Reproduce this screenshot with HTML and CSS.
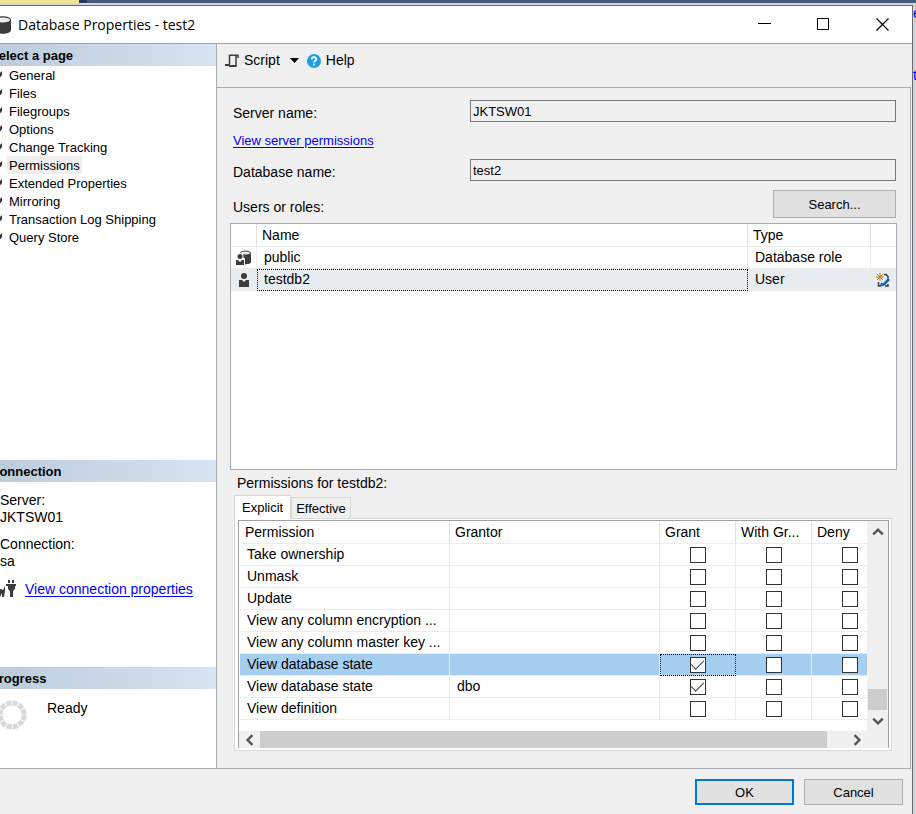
FILE: index.html
```html
<!DOCTYPE html>
<html lang="en">

<head>
    <meta charset="UTF-8">
    <meta name="viewport" content="width=device-width, initial-scale=1.0">
    <title>Database Properties - test2</title>
    <link rel="stylesheet" href="styles.css">
</head>

<body>
    <!-- shared icons -->
    <svg class="sprite" width="0" height="0">
        <symbol id="wrench" viewBox="0 0 14 14">
            <path d="M1 12l6-5c-1-3 1-5 4-5l-1 3 1 1 3-3c1 4-1 7-5 7l-5 4z" fill="#333"/>
        </symbol>
        <symbol id="chevron-up" viewBox="0 0 10 10">
            <path d="M1 7l4-4 4 4" fill="none" stroke="#555" stroke-width="2"/>
        </symbol>
        <symbol id="chevron-down" viewBox="0 0 10 10">
            <path d="M1 3l4 4 4-4" fill="none" stroke="#555" stroke-width="2"/>
        </symbol>
        <symbol id="chevron-left" viewBox="0 0 10 10">
            <path d="M7 1L3 5l4 4" fill="none" stroke="#555" stroke-width="2"/>
        </symbol>
        <symbol id="chevron-right" viewBox="0 0 10 10">
            <path d="M3 1l4 4-4 4" fill="none" stroke="#555" stroke-width="2"/>
        </symbol>
    </svg>

    <div class="desktop">
        <div class="ide-bar"><span class="ide-tab"></span><span class="ide-gap"></span></div>
        <div class="desktop-row">
            <div class="window">
                <header class="titlebar">
                    <svg class="db-icon" width="16" height="18" viewBox="0 0 16 18">
                        <path d="M0 4v10c0 5 16 5 16 0V4c0-5-16-5-16 0z" fill="#3c3c3c"/>
                        <ellipse cx="8" cy="4" rx="7" ry="2.500" fill="#eee"/>
                    </svg>
                    <h1>Database Properties - test2</h1>
                    <button class="win-btn" aria-label="Minimize">
                        <svg width="13" height="13"><path d="M0 5.500h13" stroke="#000"/></svg>
                    </button>
                    <button class="win-btn" aria-label="Maximize">
                        <svg width="13" height="13"><path d="M.5.500h11v11H.5z" fill="none" stroke="#000"/></svg>
                    </button>
                    <button class="win-btn" aria-label="Close">
                        <svg width="13" height="13"><path d="M.5.500l12 12M12.500.5l-12 12" stroke="#000" stroke-width="1.200"/></svg>
                    </button>
                </header>

                <div class="content">
                    <aside class="sidebar">
                        <h2>Select a page</h2>
                        <ul class="pages">
                            <li><svg><use href="#wrench"/></svg><span>General</span></li>
                            <li><svg><use href="#wrench"/></svg><span>Files</span></li>
                            <li><svg><use href="#wrench"/></svg><span>Filegroups</span></li>
                            <li><svg><use href="#wrench"/></svg><span>Options</span></li>
                            <li><svg><use href="#wrench"/></svg><span>Change Tracking</span></li>
                            <li class="active"><svg><use href="#wrench"/></svg><span>Permissions</span></li>
                            <li><svg><use href="#wrench"/></svg><span>Extended Properties</span></li>
                            <li><svg><use href="#wrench"/></svg><span>Mirroring</span></li>
                            <li><svg><use href="#wrench"/></svg><span>Transaction Log Shipping</span></li>
                            <li><svg><use href="#wrench"/></svg><span>Query Store</span></li>
                        </ul>

                        <h2>Connection</h2>
                        <div class="connection">
                            <p>Server:<br>JKTSW01</p>
                            <p>Connection:<br>sa</p>
                            <div class="connection-link">
                                <svg width="22" height="18" viewBox="0 0 22 18" fill="#3c3c3c">
                                    <path d="M2 9h5l2 1 2-4v5l-1 6H8v-4l-2 4H3z"/>
                                    <path d="M14 0h2v3h-2zM18 0h2v3h-2zM12 4h10v2h-1v3l-2 2v6h-3v-6l-2-2V6h-2z"/>
                                </svg>
                                <a href="#">View connection properties</a>
                            </div>
                        </div>

                        <h2>Progress</h2>
                        <div class="progress">
                            <svg width="30" height="30" viewBox="0 0 30 30">
                                <circle cx="15" cy="15" r="12" fill="none" stroke="#d9d9d9" stroke-width="5" stroke-dasharray="5.283 1"/>
                            </svg>
                            <span>Ready</span>
                        </div>
                    </aside>

                    <main class="main">
                        <div class="toolbar">
                            <button class="tool">
                                <svg width="14" height="14" viewBox="0 0 14 14" fill="none" stroke="#3c3c3c" stroke-width="1.500">
                                    <path d="M4.500 10V1.250h8.500V4M11 1.500V12"/>
                                    <path d="M0 11h4l1 1h6.500" stroke-width="2"/>
                                </svg>
                                Script
                                <svg class="caret" width="9" height="5"><path d="M0 0h9L4.500 5z"/></svg>
                            </button>
                            <button class="tool">
                                <svg width="14" height="14" viewBox="0 0 14 14">
                                    <circle cx="7" cy="7" r="7" fill="#1ba1e2"/>
                                    <path d="M4.800 5.500c0-3 4.500-3 4.500-.3C9.300 6.800 7 6.700 7 8.600M7 9.800v1.800" fill="none" stroke="#fff" stroke-width="1.800"/>
                                </svg>
                                Help
                            </button>
                        </div>

                        <div class="panel">
                            <div class="form">
                                <label for="server">Server name:</label>
                                <input id="server" type="text" value="JKTSW01" readonly>
                                <a class="server-link" href="#">View server permissions</a>
                                <label for="database">Database name:</label>
                                <input id="database" type="text" value="test2" readonly>
                            </div>
                            <div class="users-head">
                                <span>Users or roles:</span>
                                <button class="btn btn-search">Search...</button>
                            </div>

                            <div class="users">
                                <table class="grid">
                                    <colgroup><col class="col-icon"><col><col class="col-type"><col class="col-edit"></colgroup>
                                    <thead>
                                        <tr><th></th><th>Name</th><th>Type</th><th></th></tr>
                                    </thead>
                                    <tbody>
                                        <tr>
                                            <td class="icon">
                                                <svg width="16" height="16" viewBox="0 0 16 16">
                                                    <path d="M4 3v9c0 3 11 3 11 0V3z" fill="#3c3c3c"/>
                                                    <ellipse cx="9.500" cy="3" rx="5" ry="2" fill="#eee" stroke="#3c3c3c"/>
                                                    <path d="M0 8h9v8H0z" fill="#fff"/>
                                                    <circle cx="4" cy="6.500" r="3.500" fill="#fff"/>
                                                    <circle cx="4" cy="6.500" r="2.500" fill="#3c3c3c"/>
                                                    <path d="M0 10h2l2 2 2-2h2v5H0z" fill="#3c3c3c"/>
                                                </svg>
                                            </td>
                                            <td>public</td>
                                            <td>Database role</td>
                                            <td></td>
                                        </tr>
                                        <tr class="current">
                                            <td class="icon">
                                                <svg width="16" height="16" viewBox="0 0 16 16" fill="#3c3c3c">
                                                    <circle cx="8" cy="4" r="3"/>
                                                    <path d="M3 8h3l2 2 2-2h3v7H3z"/>
                                                </svg>
                                            </td>
                                            <td class="focus">testdb2</td>
                                            <td>User</td>
                                            <td class="icon">
                                                <svg width="14" height="14" viewBox="0 0 14 14" fill="none">
                                                    <path d="M4 0v8M0 4h8M1 1l6 6M7 1L1 7" stroke="#c27d1a"/>
                                                    <path d="M8 1.500h2l2 2v2M2.500 9v4H5M9 13h3v-2" stroke="#3c3c3c" stroke-width="1.500"/>
                                                    <path d="M4 13.500l1-4 2 1L12 5l2 2-5 5-2 1z" fill="#0d64b0"/>
                                                </svg>
                                            </td>
                                        </tr>
                                    </tbody>
                                </table>
                            </div>

                            <p class="caption">Permissions for testdb2:</p>
                            <div class="tabs" role="tablist">
                                <button class="tab selected" role="tab" aria-selected="true">Explicit</button>
                                <button class="tab" role="tab" aria-selected="false">Effective</button>
                            </div>
                            <div class="tab-page">
                                <div class="permissions">
                                    <div class="view">
                                        <table class="grid">
                                            <colgroup><col class="col-permission"><col><col class="col-check"><col class="col-check"><col class="col-check"></colgroup>
                                            <thead>
                                                <tr><th>Permission</th><th>Grantor</th><th>Grant</th><th>With Gr...</th><th>Deny</th></tr>
                                            </thead>
                                            <tbody>
                                                <tr>
                                                    <td>Take ownership</td><td></td>
                                                    <td class="check"><input type="checkbox" aria-label="Grant"></td>
                                                    <td class="check"><input type="checkbox" aria-label="With Grant"></td>
                                                    <td class="check"><input type="checkbox" aria-label="Deny"></td>
                                                </tr>
                                                <tr>
                                                    <td>Unmask</td><td></td>
                                                    <td class="check"><input type="checkbox" aria-label="Grant"></td>
                                                    <td class="check"><input type="checkbox" aria-label="With Grant"></td>
                                                    <td class="check"><input type="checkbox" aria-label="Deny"></td>
                                                </tr>
                                                <tr>
                                                    <td>Update</td><td></td>
                                                    <td class="check"><input type="checkbox" aria-label="Grant"></td>
                                                    <td class="check"><input type="checkbox" aria-label="With Grant"></td>
                                                    <td class="check"><input type="checkbox" aria-label="Deny"></td>
                                                </tr>
                                                <tr>
                                                    <td>View any column encryption ...</td><td></td>
                                                    <td class="check"><input type="checkbox" aria-label="Grant"></td>
                                                    <td class="check"><input type="checkbox" aria-label="With Grant"></td>
                                                    <td class="check"><input type="checkbox" aria-label="Deny"></td>
                                                </tr>
                                                <tr>
                                                    <td>View any column master key ...</td><td></td>
                                                    <td class="check"><input type="checkbox" aria-label="Grant"></td>
                                                    <td class="check"><input type="checkbox" aria-label="With Grant"></td>
                                                    <td class="check"><input type="checkbox" aria-label="Deny"></td>
                                                </tr>
                                                <tr class="highlight">
                                                    <td>View database state</td><td></td>
                                                    <td class="check focus"><input type="checkbox" aria-label="Grant" checked></td>
                                                    <td class="check"><input type="checkbox" aria-label="With Grant"></td>
                                                    <td class="check"><input type="checkbox" aria-label="Deny"></td>
                                                </tr>
                                                <tr>
                                                    <td>View database state</td><td>dbo</td>
                                                    <td class="check"><input type="checkbox" aria-label="Grant" checked></td>
                                                    <td class="check"><input type="checkbox" aria-label="With Grant"></td>
                                                    <td class="check"><input type="checkbox" aria-label="Deny"></td>
                                                </tr>
                                                <tr>
                                                    <td>View definition</td><td></td>
                                                    <td class="check"><input type="checkbox" aria-label="Grant"></td>
                                                    <td class="check"><input type="checkbox" aria-label="With Grant"></td>
                                                    <td class="check"><input type="checkbox" aria-label="Deny"></td>
                                                </tr>
                                            </tbody>
                                        </table>
                                    </div>
                                    <div class="vscroll">
                                        <button aria-label="Scroll up"><svg width="12" height="12"><use href="#chevron-up"/></svg></button>
                                        <span class="thumb"></span>
                                        <button aria-label="Scroll down"><svg width="12" height="12"><use href="#chevron-down"/></svg></button>
                                    </div>
                                    <div class="hscroll">
                                        <button aria-label="Scroll left"><svg width="12" height="12"><use href="#chevron-left"/></svg></button>
                                        <span class="thumb"></span>
                                        <button aria-label="Scroll right"><svg width="12" height="12"><use href="#chevron-right"/></svg></button>
                                    </div>
                                </div>
                            </div>
                        </div>
                    </main>
                </div>

                <footer class="footer">
                    <button class="btn btn-default">OK</button>
                    <button class="btn">Cancel</button>
                </footer>
            </div>
            <div class="ide-edge"><span>e</span><span>t</span></div>
        </div>
    </div>
</body>

</html>
```
FILE: styles.css
```css
* {
    box-sizing: border-box;
}

body {
    margin: 0;
    font-family: "Liberation Sans", Arial, sans-serif;
    font-size: 14px;
    line-height: 17px;
    color: #000;
}

h1, h2, p, ul {
    margin: 0;
    padding: 0;
    font-weight: normal;
}

button, input {
    font: inherit;
    color: inherit;
}

a {
    color: #0000ff;
    text-decoration: underline;
    text-underline-offset: 2px;
}

svg {
    display: block;
    flex: none;
}

.sprite {
    position: absolute;
}

/* the editor that shows around the dialog */
.desktop {
    display: flex;
    flex-direction: column;
    min-height: 100vh;
    overflow: hidden;
}

.ide-bar {
    display: flex;
    height: 5px;
    background: #455b7c;
    border-bottom: 2px solid #d4d6dc;
}

.ide-tab {
    width: 79px;
    background: #f3e293;
}

.ide-gap {
    width: 8px;
    background: #26355a;
}

.desktop-row {
    flex: 1;
    display: flex;
}

.ide-edge {
    width: 3px;
    overflow: hidden;
    background: #d2d3d8;
    color: #0000ff;
    display: flex;
    flex-direction: column;
    gap: 45px;
}

/* the dialog is dragged a little past the left edge of the screen */
.window {
    flex: 1;
    margin-left: -12px;
    display: flex;
    flex-direction: column;
    background: #f0f0f0;
    border-top: 1px solid #6b6b6b;
    border-right: 1px solid #6b6b6b;
}

.titlebar {
    display: flex;
    align-items: center;
    height: 38px;
    padding-left: 7px;
    background: #fff;
    border-bottom: 1px solid #a0a0a0;
}

.titlebar h1 {
    flex: 1;
    margin-left: 7px;
    font-family: "Open Sans", "Noto Sans", sans-serif;
    font-size: 14px;
    line-height: 20px;
}

.win-btn {
    width: 59px;
    height: 37px;
    padding: 0;
    border: none;
    background: none;
    display: flex;
    align-items: center;
    justify-content: center;
}

.content {
    flex: 1;
    display: flex;
}

/* sidebar */
.sidebar {
    width: 229px;
    display: flex;
    flex-direction: column;
    background: #fff;
    border-right: 1px solid #a9abb2;
    border-bottom: 1px solid #a9abb2;
}

.sidebar h2 {
    height: 22px;
    padding-left: 2px;
    font-size: 13px;
    font-weight: bold;
    line-height: 24px;
    background: linear-gradient(to right, #bccbda, #d7e4f2);
}

.pages {
    flex: 1;
    list-style: none;
    font-size: 13px;
}

.pages li {
    display: flex;
    align-items: center;
    height: 18px;
}

.pages svg {
    width: 14px;
    height: 14px;
    margin-right: 5px;
}

.pages span {
    height: 18px;
    padding: 0 2px;
    line-height: 20px;
}

.pages .active span {
    background: #efefef;
}

.connection {
    height: 185px;
    padding: 10px 12px;
}

.connection p {
    margin-bottom: 10px;
}

.connection-link {
    display: flex;
    align-items: center;
    gap: 9px;
    margin-left: -6px;
}

.progress {
    display: flex;
    align-items: flex-start;
    gap: 20px;
    height: 79px;
    padding: 11px 9px;
}

/* right side */
.main {
    flex: 1;
    display: flex;
    flex-direction: column;
}

.toolbar {
    display: flex;
    align-items: flex-start;
    gap: 8px;
    height: 43px;
    padding: 8px;
}

.tool {
    display: flex;
    align-items: center;
    gap: 5px;
    padding: 0;
    border: none;
    background: none;
}

.caret {
    margin-left: 5px;
}

.panel {
    flex: 1;
    display: flex;
    flex-direction: column;
    margin-right: 1px;
    padding: 12px 13px 17px;
    border: 1px solid #a9abb2;
    border-left: none;
}

.form {
    display: grid;
    grid-template-columns: 237px 1fr;
    row-gap: 10px;
    padding: 0 1px 0 3px;
}

.form label {
    padding-top: 5px;
}

.form input {
    width: 100%;
    height: 22px;
    padding: 0 2px;
    font-size: 13px;
    background: #f0f0f0;
    border: 1px solid #7a7a7a;
    border-radius: 0;
}

.server-link {
    grid-column: 1 / 3;
    justify-self: start;
    font-size: 13px;
    margin-top: 1px;
    line-height: 16px;
}

.users-head {
    display: flex;
    align-items: center;
    justify-content: space-between;
    padding: 9px 1px 5px 3px;
}

.users-head span {
    padding-top: 6px;
}

.btn {
    width: 99px;
    height: 26px;
    padding: 0;
    font-size: 13px;
    background: #e1e1e1;
    border: 1px solid #adadad;
}

.btn-search {
    width: 123px;
    height: 28px;
}

.btn-default {
    border: 2px solid #0078d7;
}

.users {
    flex: 1;
    min-height: 120px;
    background: #fff;
    border: 1px solid #a9abb2;
}

/* data grids */
.grid {
    width: 100%;
    table-layout: fixed;
    border-collapse: separate;
    border-spacing: 0;
}

.grid th,
.grid td {
    height: 22px;
    padding: 0 7px;
    font-weight: normal;
    line-height: 21px;
    text-align: left;
    white-space: nowrap;
    border-right: 1px solid #ececec;
    border-bottom: 1px solid #ececec;
}

.grid th {
    height: 23px;
    padding: 0 5px;
    border-right-color: #e0e0e0;
}

.grid .icon {
    padding: 0 5px;
}

.users .grid th:last-child,
.users .grid td:last-child {
    border-right: none;
}

.col-icon {
    width: 26px;
}

.col-type {
    width: 123px;
}

.col-edit {
    width: 25px;
}

.col-permission {
    width: 210px;
}

.col-check {
    width: 76px;
}

.grid .current td {
    background: #e8edf2;
}

.grid .highlight td {
    background: #a5cef0;
    border-color: #e4eef7;
}

.grid .focus {
    outline: 1px dotted #000;
    outline-offset: -1px;
}

.grid .check {
    padding: 0;
}

.check input {
    appearance: none;
    display: flex;
    align-items: center;
    justify-content: center;
    width: 16px;
    height: 16px;
    margin: 3px auto 2px;
    background: #fff;
    border: 1px solid #333;
}

.check input:checked::before {
    content: "";
    width: 6px;
    height: 11px;
    margin-bottom: 4px;
    border: solid #444;
    border-width: 0 1px 1px 0;
    transform: rotate(45deg);
}

/* tabs */
.caption {
    padding: 5px 7px 3px;
}

.tabs {
    display: flex;
    align-items: flex-end;
    padding-left: 4px;
}

.tab {
    height: 21px;
    padding: 0 4px;
    font-size: 13px;
    background: #f0f0f0;
    border: 1px solid #d9d9d9;
    border-bottom: none;
}

.tab.selected {
    height: 24px;
    padding: 0 7px;
    margin-bottom: -1px;
    position: relative;
    background: #fff;
}

.tab-page {
    margin: 0 5px 0 4px;
    padding: 1px 2px 2px 3px;
    background: #fff;
    border: 1px solid #d9d9d9;
}

.permissions {
    display: grid;
    grid-template-columns: 1fr 21px;
    border: 1px solid #a0a0a0;
    border-bottom: none;
}

.view {
    height: 210px;
    min-width: 0;
    padding-left: 1px;
    overflow: hidden;
}

.view .grid {
    width: calc(100% + 21px);
}

.vscroll,
.hscroll {
    display: flex;
    background: #f0f0f0;
}

.vscroll {
    flex-direction: column;
}

.vscroll .thumb {
    height: 21px;
    margin: auto 1px 0;
    background: #cdcdcd;
}

.hscroll {
    grid-column: 1 / 3;
    height: 17px;
    padding-right: 21px;
}

.hscroll .thumb {
    flex: 1;
    margin-right: 19px;
    background: #cdcdcd;
}

.vscroll button,
.hscroll button {
    display: flex;
    align-items: center;
    justify-content: center;
    width: 21px;
    height: 21px;
    padding: 0;
    border: none;
    background: none;
}

.hscroll button {
    height: 17px;
}

.footer {
    display: flex;
    justify-content: flex-end;
    gap: 10px;
    height: 45px;
    padding: 10px 9px;
}
```
